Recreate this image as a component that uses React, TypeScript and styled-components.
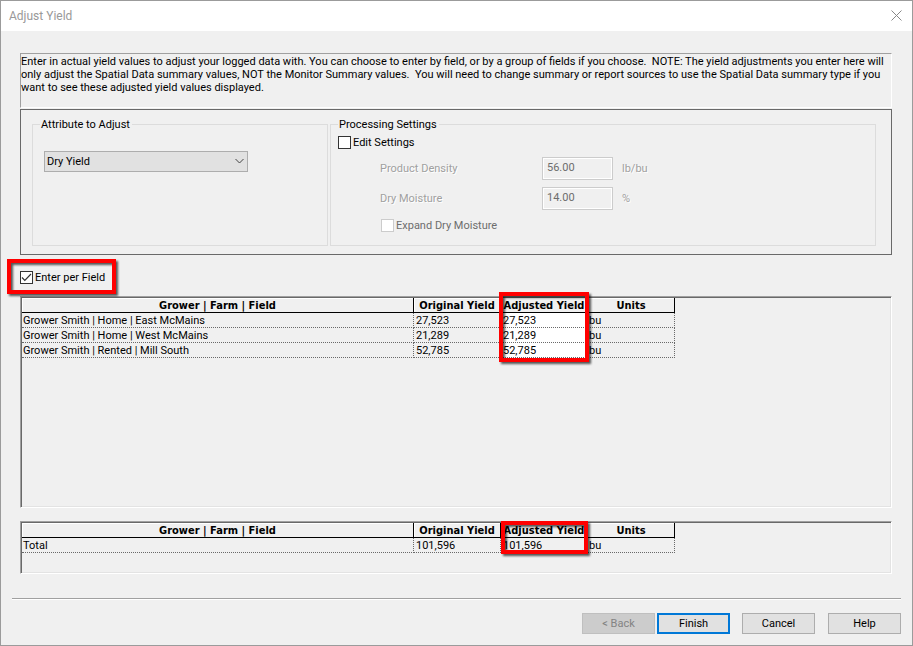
import React, { useState } from "react";
import styled, { createGlobalStyle, css } from "styled-components";

const GlobalStyle = createGlobalStyle`
  * { box-sizing: border-box; }
  body {
    margin: 0;
    background: #f0f0f0;
    color: #000;
    font-family: Roboto, "Liberation Sans", sans-serif;
    font-size: 11px;
    line-height: 13px;
  }
  button, input, select { font: inherit; color: inherit; }
`;

const Dialog = styled.main`
  display: flex;
  flex-direction: column;
  min-height: 100vh;
  border: 1px solid #9b9b9b;
  background: #f0f0f0;
`;

const TitleBar = styled.header`
  display: flex;
  align-items: center;
  justify-content: space-between;
  height: 30px;
  padding: 0 8px;
  background: #fff;
`;

const Title = styled.h1`
  margin: 0;
  font-size: 12px;
  font-weight: 400;
  color: #999;
`;

const CloseButton = styled.button`
  display: flex;
  padding: 0 2px 2px;
  border: 0;
  background: none;
  color: #888;
`;

const Body = styled.div`
  display: flex;
  flex: 1;
  flex-direction: column;
  padding: 22px 20px 0 19px;
`;

const Description = styled.p`
  margin: 0 0 1px;
  height: 55px;
  padding-top: 1px;
  border: 1px solid;
  border-color: #a0a0a0 #fff #fff #a0a0a0;
  white-space: pre-wrap;
`;

const SettingsPanel = styled.section`
  display: grid;
  grid-template-columns: 296px 1fr;
  gap: 2px;
  height: 146px;
  padding: 7px 15px 8px 11px;
  border: 1px solid #696969;
`;

const Group = styled.fieldset`
  min-width: 0;
  margin: 0;
  padding: 0 0 0 7px;
  border: 1px solid #dcdcdc;
`;

const Legend = styled.legend`
  height: 14px;
  padding: 0 2px 0 1px;
  line-height: 15px;
`;

const SelectWrap = styled.div`
  display: grid;
  align-items: center;
  width: 204px;
  margin: 20px 0 0 4px;
  > * { grid-area: 1 / 1; }
  > svg { justify-self: end; margin-right: 3px; pointer-events: none; }
`;

const Select = styled.select`
  appearance: none;
  width: 100%;
  height: 21px;
  padding: 0 20px 0 2px;
  border: 1px solid #adadad;
  border-radius: 0;
  background: #e1e1e1;
`;

const CheckLabel = styled.label<{ $disabled?: boolean }>`
  display: flex;
  align-items: center;
  gap: 2px;
  width: max-content;
  height: 13px;
  color: ${(p) => (p.$disabled ? "#6d6d6d" : "#000")};
`;

const CheckSlot = styled.span`
  display: grid;
  width: 13px;
  height: 13px;
  > * { grid-area: 1 / 1; }
  > svg { pointer-events: none; }
`;

const CheckInput = styled.input`
  appearance: none;
  width: 13px;
  height: 13px;
  margin: 0;
  border: 1px solid #333;
  background: #fff;
  &:disabled { border-color: #ccc; }
`;

const ProcessingBody = styled.div`
  padding-top: 5px;
`;

const Fields = styled.div`
  display: grid;
  grid-template-columns: 162px 71px 1fr;
  row-gap: 7px;
  padding: 8px 0 0 42px;
`;

const embossed = css`
  color: #a0a0a0;
  text-shadow: 1px 1px 0 #fff;
`;

const FieldLabel = styled.label`
  ${embossed}
  align-self: center;
`;

const Unit = styled.span`
  ${embossed}
  align-self: center;
  padding-left: 9px;
`;

const FieldInput = styled.input`
  width: 100%;
  height: 23px;
  padding: 0 4px 2px;
  border: 1px solid #ccc;
  border-radius: 0;
  outline: 1px solid #fff;
  outline-offset: -2px;
  background: #f0f0f0;
  &:disabled { color: #6d6d6d; }
`;

const ExpandRow = styled.div`
  padding: 9px 0 0 43px;
`;

const EnterRow = styled.div`
  position: relative;
  padding: 16px 0 12px;
`;

const shadowed = css`
  position: absolute;
  border: 4px solid #ff0000;
  filter: drop-shadow(2px 2px 1px rgba(0, 0, 0, 0.65));
  pointer-events: none;
`;

const EnterMark = styled.div`
  ${shadowed}
  z-index: 1;
  top: 4px;
  left: -13px;
  width: 109px;
  height: 35px;
`;

const ColumnMark = styled.div<{ $inset?: boolean }>`
  ${shadowed}
  top: ${(p) => (p.$inset ? "-2px" : "-6px")};
  bottom: ${(p) => (p.$inset ? "-1px" : "-4px")};
  left: ${(p) => (p.$inset ? "479px" : "477px")};
  width: ${(p) => (p.$inset ? "87px" : "90px")};
`;

const GridBox = styled.section<{ $grow?: boolean }>`
  flex: ${(p) => (p.$grow ? "1 0 200px" : "0 0 53px")};
  margin-bottom: ${(p) => (p.$grow ? "13px" : "24px")};
  border: 1px solid;
  border-color: #a0a0a0 #fff #fff #a0a0a0;
  box-shadow: inset 1px 1px #696969, inset -1px -1px #e3e3e3;
  padding: 1px;
`;

const TableWrap = styled.div`
  position: relative;
  width: max-content;
`;

const Table = styled.table`
  table-layout: fixed;
  width: 653px;
  border-collapse: separate;
  border-spacing: 0;
`;

const Th = styled.th<{ $wide?: boolean }>`
  width: ${(p) => (p.$wide ? "392px" : "87px")};
  height: 15px;
  padding: 0;
  border-right: 1px solid #000;
  border-bottom: 1px solid #000;
  box-shadow: inset 1px 1px #fff;
  font-family: "DejaVu Sans Condensed", "DejaVu Sans", sans-serif;
  font-weight: 700;
  white-space: nowrap;
`;

const Td = styled.td<{ $editable?: boolean }>`
  height: 15px;
  padding: 0 0 0 2px;
  border-right: 1px dotted #696969;
  border-bottom: 1px dotted #696969;
  background: ${(p) => (p.$editable ? "#fff" : "transparent")};
  &:first-child, &:last-child { padding-left: 1px; }
`;

const CellInput = styled.input`
  display: block;
  width: 100%;
  height: 14px;
  padding: 0;
  border: 0;
  background: transparent;
`;

const Footer = styled.footer`
  display: flex;
  justify-content: flex-end;
  margin: 0 11px;
  padding: 14px 0 11px;
  border-top: 1px solid #a0a0a0;
  box-shadow: inset 0 1px #fff;
`;

const Button = styled.button<{ $primary?: boolean; $gap?: number }>`
  width: 73px;
  height: 21px;
  margin-left: ${(p) => p.$gap ?? 0}px;
  padding: 0;
  border: ${(p) => (p.$primary ? "2px solid #0078d7" : "1px solid #adadad")};
  background: #e1e1e1;
  &:disabled {
    border-color: #bfbfbf;
    background: #ccc;
    color: #838383;
  }
`;

type CheckProps = {
  label: string;
  disabled?: boolean;
  initial?: boolean;
};

function Check({ label, disabled, initial = false }: CheckProps) {
  const [on, setOn] = useState(initial);
  return (
    <CheckLabel $disabled={disabled}>
      <CheckSlot>
        <CheckInput
          type="checkbox"
          checked={on}
          disabled={disabled}
          onChange={() => setOn(!on)}
        />
        {on && (
          <svg width="13" height="13" viewBox="0 0 13 13" fill="none" stroke="#333" strokeWidth="1.2">
            <path d="M2 6.5 4.8 9.3 11 3" />
          </svg>
        )}
      </CheckSlot>
      {label}
    </CheckLabel>
  );
}

type Row = { name: string; original: string; adjusted: string };

const fieldRows: Row[] = [
  { name: "Grower Smith | Home | East McMains", original: "27,523", adjusted: "27,523" },
  { name: "Grower Smith | Home | West McMains", original: "21,289", adjusted: "21,289" },
  { name: "Grower Smith | Rented | Mill South", original: "52,785", adjusted: "52,785" },
];

const totalRows: Row[] = [{ name: "Total", original: "101,596", adjusted: "101,596" }];

function YieldTable({ rows, editable }: { rows: Row[]; editable?: boolean }) {
  return (
    <TableWrap>
      <Table>
        <thead>
          <tr>
            <Th $wide>Grower | Farm | Field</Th>
            <Th>Original Yield</Th>
            <Th>Adjusted Yield</Th>
            <Th>Units</Th>
          </tr>
        </thead>
        <tbody>
          {rows.map((r) => (
            <tr key={r.name}>
              <Td>{r.name}</Td>
              <Td>{r.original}</Td>
              <Td $editable={editable}>
                {editable ? (
                  <CellInput defaultValue={r.adjusted} aria-label={`Adjusted yield, ${r.name}`} />
                ) : (
                  r.adjusted
                )}
              </Td>
              <Td>bu</Td>
            </tr>
          ))}
        </tbody>
      </Table>
      <ColumnMark $inset={!editable} />
    </TableWrap>
  );
}

export default function App() {
  return (
    <Dialog>
      <GlobalStyle />
      <TitleBar>
        <Title>Adjust Yield</Title>
        <CloseButton aria-label="Close">
          <svg width="11" height="11" viewBox="0 0 11 11" fill="none" stroke="currentColor">
            <path d="M.5.5l10 10M10.5.5l-10 10" />
          </svg>
        </CloseButton>
      </TitleBar>
      <Body>
        <Description>
          {
            "Enter in actual yield values to adjust your logged data with. You can choose to enter by field, or by a group of fields if you choose.  NOTE: The yield adjustments you enter here will only adjust the Spatial Data summary values, NOT the Monitor Summary values.  You will need to change summary or report sources to use the Spatial Data summary type if you want to see these adjusted yield values displayed."
          }
        </Description>
        <SettingsPanel>
          <Group>
            <Legend>Attribute to Adjust</Legend>
            <SelectWrap>
              <Select aria-label="Attribute to Adjust" defaultValue="Dry Yield">
                <option>Dry Yield</option>
              </Select>
              <svg width="11" height="7" viewBox="0 0 11 7" fill="none" stroke="#444">
                <path d="M1.5 1l4 4 4-4" />
              </svg>
            </SelectWrap>
          </Group>
          <Group>
            <Legend>Processing Settings</Legend>
            <ProcessingBody>
              <Check label="Edit Settings" />
              <Fields>
                <FieldLabel htmlFor="density">Product Density</FieldLabel>
                <FieldInput id="density" defaultValue="56.00" disabled />
                <Unit>lb/bu</Unit>
                <FieldLabel htmlFor="moisture">Dry Moisture</FieldLabel>
                <FieldInput id="moisture" defaultValue="14.00" disabled />
                <Unit>%</Unit>
              </Fields>
              <ExpandRow>
                <Check label="Expand Dry Moisture" disabled />
              </ExpandRow>
            </ProcessingBody>
          </Group>
        </SettingsPanel>
        <EnterRow>
          <Check label="Enter per Field" initial />
          <EnterMark />
        </EnterRow>
        <GridBox $grow>
          <YieldTable rows={fieldRows} editable />
        </GridBox>
        <GridBox>
          <YieldTable rows={totalRows} />
        </GridBox>
      </Body>
      <Footer>
        <Button disabled>&lt; Back</Button>
        <Button $primary $gap={2}>Finish</Button>
        <Button $gap={12}>Cancel</Button>
        <Button $gap={13}>Help</Button>
      </Footer>
    </Dialog>
  );
}
